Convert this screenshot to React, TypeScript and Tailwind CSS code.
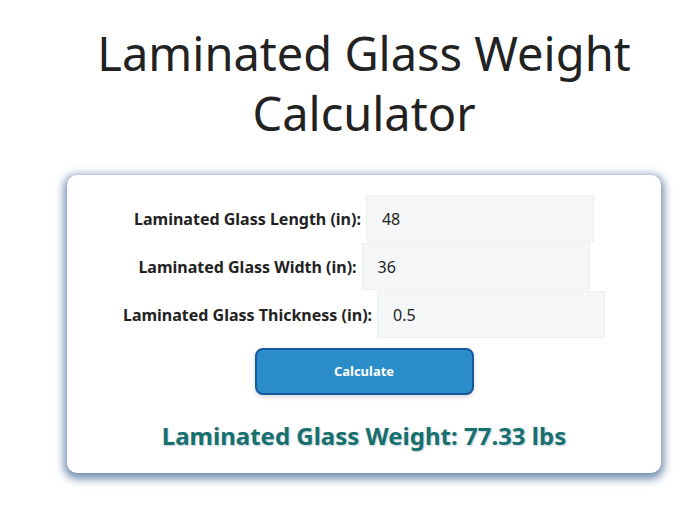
import { useState } from "react";

const rows = [
  { label: "Laminated Glass Length (in):", value: "48" },
  { label: "Laminated Glass Width (in):", value: "36" },
  { label: "Laminated Glass Thickness (in):", value: "0.5" },
];

export default function App() {
  const [values, setValues] = useState(rows.map((r) => r.value));

  return (
    <div className="min-h-[512px] bg-white pl-[29px] font-['Noto_Sans',sans-serif] text-[#222]">
      {/* Title */}
      <h1 className="pt-[23px] text-center text-[47px] font-normal leading-[60px] text-[#222]">
        Laminated Glass Weight
        <br />
        Calculator
      </h1>

      {/* Calculator card */}
      <div className="mx-auto mt-[32px] w-[594px] rounded-[10px] bg-white pb-[21px] pt-[20px] shadow-[0_3px_8px_3px_rgba(70,105,150,0.75)]">
        <div className="flex flex-col gap-px">
          {rows.map((row, i) => (
            <div key={row.label} className="flex items-center justify-center gap-[5px]">
              <label className="text-[16px] font-bold text-[#222]">{row.label}</label>
              <input
                type="text"
                value={values[i]}
                onChange={(e) => {
                  const next = [...values];
                  next[i] = e.target.value;
                  setValues(next);
                }}
                className="h-[47px] w-[228px] border border-[#eceef0] bg-[#f5f6f8] px-[15px] text-[16px] text-[#222] outline-none"
              />
            </div>
          ))}
        </div>

        <div className="mt-[10px] flex justify-center">
          <button className="h-[47px] w-[219px] rounded-[8px] border-2 border-[#1659a0] bg-[#2a8cc8] text-[13px] font-bold text-white shadow-[0_2px_4px_rgba(0,0,0,0.15)]">
            Calculate
          </button>
        </div>

        <p className="mt-[25px] text-center text-[24px] font-bold leading-[32px] text-[#16706e] [text-shadow:1px_1px_2px_rgba(60,90,120,0.3)]">
          Laminated Glass Weight: 77.33 lbs
        </p>
      </div>
    </div>
  );
}
